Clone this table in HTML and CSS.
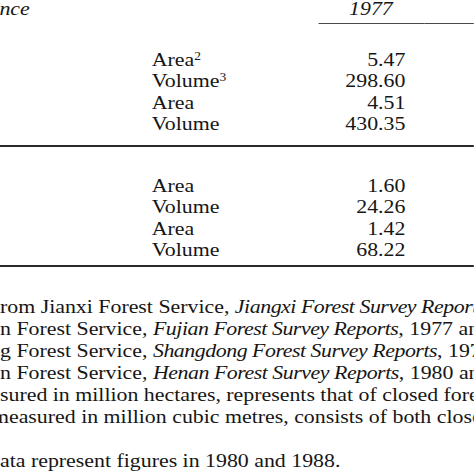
FILE: index.html
```html
<!DOCTYPE html>
<html lang="en">
<head>
<meta charset="utf-8">
<title>Forest survey table</title>
<link rel="stylesheet" href="styles.css">
</head>
<body>
<div class="page">
  <div class="table">
    <div class="row head">
      <div class="c1"><span class="prov">Province</span></div>
      <div class="c2"></div>
      <div class="c3 year">1977</div>
      <div class="c4 year"></div>
    </div>

    <div class="group g1">
      <div class="row"><div class="c1"></div><div class="c2">Area<sup>2</sup></div><div class="c3 num">5.47</div><div class="c4"></div></div>
      <div class="row"><div class="c1"></div><div class="c2">Volume<sup>3</sup></div><div class="c3 num">298.60</div><div class="c4"></div></div>
      <div class="row"><div class="c1"></div><div class="c2">Area</div><div class="c3 num">4.51</div><div class="c4"></div></div>
      <div class="row"><div class="c1"></div><div class="c2">Volume</div><div class="c3 num">430.35</div><div class="c4"></div></div>
    </div>
    <div class="rule"></div>

    <div class="group g2">
      <div class="row"><div class="c1"></div><div class="c2">Area</div><div class="c3 num">1.60</div><div class="c4"></div></div>
      <div class="row"><div class="c1"></div><div class="c2">Volume</div><div class="c3 num">24.26</div><div class="c4"></div></div>
      <div class="row"><div class="c1"></div><div class="c2">Area</div><div class="c3 num">1.42</div><div class="c4"></div></div>
      <div class="row"><div class="c1"></div><div class="c2">Volume</div><div class="c3 num">68.22</div><div class="c4"></div></div>
    </div>
    <div class="rule"></div>
  </div>

  <div class="notes">
    <p>rom Jianxi Forest Service, <i>Jiangxi Forest Survey Reports,</i> 1977 and 1988</p>
    <p>n Forest Service, <i>Fujian Forest Survey Reports</i>, 1977 and 1988</p>
    <p>g Forest Service, <i>Shangdong Forest Survey Reports</i>, 1977 and 1988</p>
    <p>n Forest Service, <i>Henan Forest Survey Reports</i>, 1980 and 1988</p>
    <p>sured in million hectares, represents that of closed forest</p>
    <p class="cut-m">measured in million cubic metres, consists of both closed</p>
    <p class="blank">&nbsp;</p>
    <p>ata represent figures in 1980 and 1988.</p>
  </div>
</div>
</body>
</html>
```

FILE: styles.css
```css
html, body {
  margin: 0;
  padding: 0;
  background: #ffffff;
}

body {
  width: 474px;
  height: 474px;
  overflow: hidden;
}

.page {
  width: 412px;
  transform: scaleX(1.15);
  transform-origin: 0 0;
  font-family: "Liberation Serif", "Times New Roman", serif;
  font-size: 19px;
  line-height: 21.5px;
  color: #161616;
}

.row {
  display: grid;
  grid-template-columns: 132px 144.5px 92px 1fr;
}

.num {
  text-align: right;
  padding-right: 16px;
}

.head {
  line-height: 17px;
}

.head .c1 {
  overflow: hidden;
  white-space: nowrap;
  font-style: italic;
}

.prov {
  display: inline-block;
  margin-left: -42px;
}

.year {
  font-style: italic;
  text-align: center;
  padding-bottom: 5.5px;
  border-bottom: 1.5px solid #4a4a4a;
}

.g1 {
  margin-top: 25px;
}

.g2 {
  margin-top: 28px;
}

.rule {
  height: 2px;
  background: #2a2a2a;
}

.g1 + .rule {
  margin-top: 10px;
}

.g2 + .rule {
  margin-top: 4px;
}

sup {
  font-size: 0.62em;
  line-height: 0;
  vertical-align: 0.55em;
}

.notes {
  margin-top: 29.5px;
  line-height: 22px;
}

.notes p {
  margin: 0;
  white-space: nowrap;
  overflow: hidden;
}

.notes i {
  letter-spacing: -0.4px;
}

.cut-m {
  margin-left: -7px !important;
}
```
